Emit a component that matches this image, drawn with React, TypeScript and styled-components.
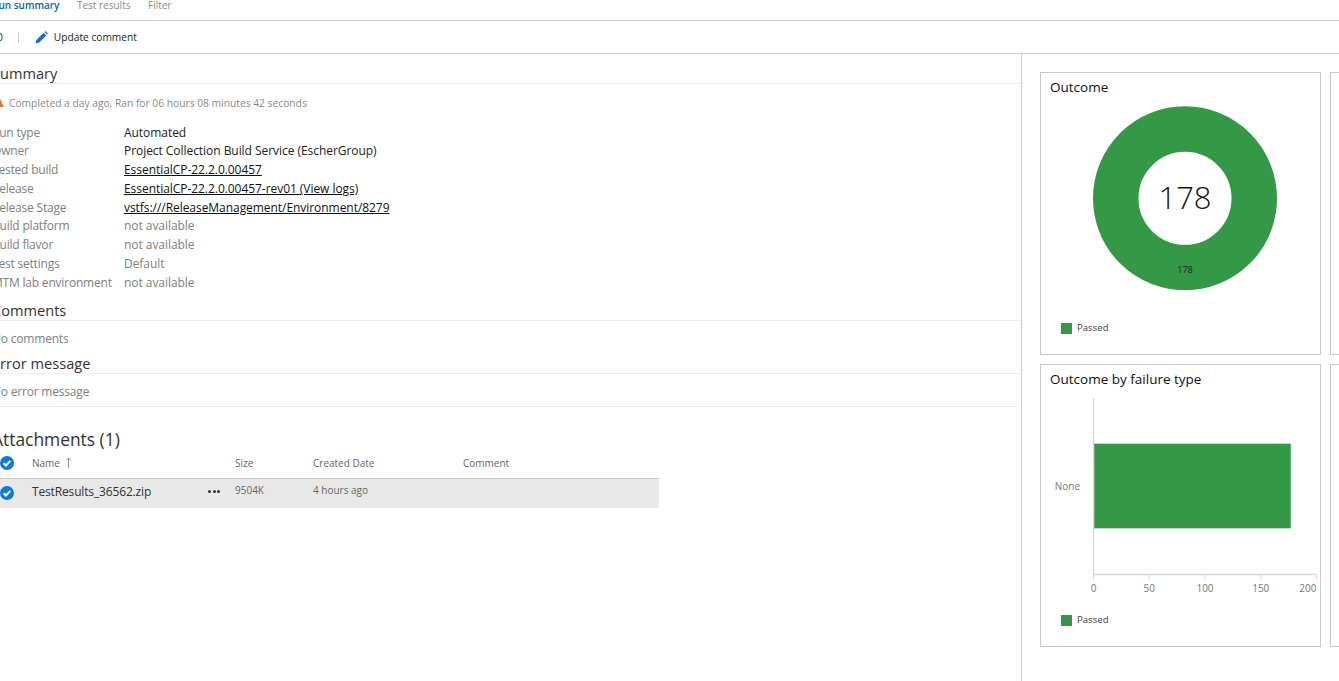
import React from "react";
import styled, { createGlobalStyle } from "styled-components";

const Global = createGlobalStyle`
  html, body { margin: 0; padding: 0; height: 100%; overflow: hidden; background: #fff; }
  body { font-family: "Open Sans", "Noto Sans", sans-serif; font-size: 12px; color: #222; }
  #root { height: 100%; }
`;
const Page = styled.div`
  width: 1347px; height: 681px; margin-left: -8px; display: flex; flex-direction: column; overflow: hidden;
`;
const Tabs = styled.div`
  height: 20px; flex: none; display: flex; gap: 17.5px; border-bottom: 1px solid #ccc;
  font-size: 10px; line-height: 11px;
`;
const Tab = styled.span<{ $active?: boolean }>`
  color: ${p => (p.$active ? "#0f5f9e" : "#8a8a8a")};
  font-weight: ${p => (p.$active ? 600 : 400)};
`;
const Toolbar = styled.div`
  height: 32px; flex: none; display: flex; align-items: center; border-bottom: 1px solid #ccc; font-size: 10.2px; color: #222;
`;
const ToolCount = styled.span`margin-left: 5px;`;
const Sep = styled.span`width: 1px; height: 11px; background: #ccc; margin: 0 16px 0 15px;`;
const Pencil = styled.svg`margin-right: 6px; flex: none;`;
const Body = styled.div`flex: 1; display: flex; min-height: 0;`;
const Main = styled.div`width: 1030px; flex: none; border-right: 1px solid #ccc; box-sizing: border-box;`;
const SectionTitle = styled.div<{ $top: number }>`
  font-size: 14.6px; line-height: 19px; color: #333; border-bottom: 1px solid #eee;
  padding-top: ${p => p.$top}px; height: 19px;
`;
const Status = styled.div`display: flex; align-items: center; gap: 4px; margin-top: 12px; font-size: 10.25px; color: #8a8a8a; line-height: 14px;`;
const Warn = styled.svg`margin-left: 3px; flex: none;`;
const Rows = styled.div`margin-top: 13.7px;`;
const Row = styled.div`display: grid; grid-template-columns: 132px 1fr; height: 18.75px; line-height: 18px;`;
const Label = styled.span`color: #808080; letter-spacing: -0.2px;`;
const Value = styled.span<{ $muted?: boolean }>`
  color: ${p => (p.$muted ? "#808080" : "#222")}; letter-spacing: -0.05px;
`;
const LinkValue = styled.span`color: #111; text-decoration: underline; letter-spacing: -0.05px;`;
const Note = styled.div<{ $ruled?: boolean }>`
  color: #808080; letter-spacing: -0.2px; padding-top: 9px; line-height: 18px;
  height: ${p => (p.$ruled ? "23px" : "14px")};
  border-bottom: ${p => (p.$ruled ? "1px solid #eee" : "none")};
`;
const Table = styled.div`width: 667px;`;
const AttTitle = styled.div`font-size: 17.4px; line-height: 22px; color: #333; margin-top: 21px;`;
const TableRow = styled.div<{ $head?: boolean }>`
  display: grid; grid-template-columns: 40px 176px 27px 78px 150px 1fr; align-items: center;
  height: ${p => (p.$head ? "26px" : "29px")};
  padding-bottom: ${p => (p.$head ? "2px" : "0")};
  background: ${p => (p.$head ? "#fff" : "#e8e8e8")};
  border-bottom: ${p => (p.$head ? "1px solid #ccc" : "none")};
  font-size: 10px; color: #666;
`;
const CheckCell = styled.span`padding-left: 8px; display: flex;`;
const NameHead = styled.span`display: flex; align-items: center; gap: 5px;`;
const FileName = styled.span`font-size: 12px; color: #333; letter-spacing: -0.15px; padding-bottom: 3px;`;
const RowCell = styled.span`padding-bottom: 7px;`;
const Dots = styled.span`display: flex; gap: 1.5px; padding-bottom: 3px;`;
const Dot = styled.i`width: 3px; height: 3px; background: #333; border-radius: 50%;`;
const Side = styled.div`flex: 1; display: grid; grid-template-columns: 281px 281px; grid-auto-rows: 283px; gap: 9px 9px; padding: 18px 0 0 18px;`;
const Card = styled.div`border: 1px solid #c8c8c8; box-sizing: border-box; display: flex; flex-direction: column; padding: 6px 9px; height: 283px;`;
const CardTitle = styled.div`font-size: 13.5px; line-height: 17px; color: #111;`;
const Chart = styled.div`flex: 1; display: flex; min-height: 0;`;
const ChartSvg = styled.svg`overflow: visible; font-family: "Open Sans", "Noto Sans", sans-serif;`;
const Legend = styled.div`display: flex; align-items: center; gap: 5px; padding-left: 11px; font-size: 9.6px; line-height: 14px; color: #444; margin-bottom: 13px;`;
const Swatch = styled.span`width: 11px; height: 11px; background: #339947;`;

const Check = () => (
  <svg width="14" height="14" viewBox="0 0 14 14"><circle cx="7" cy="7" r="7" fill="#0f7ad6" /><path d="M3.6 7.2l2.3 2.3 4.4-4.6" fill="none" stroke="#fff" strokeWidth="2" /></svg>
);

const ticks = [0, 50, 100, 150, 200];

export default function App() {
  return (
    <Page>
      <Global />
      <Tabs><Tab $active>Run summary</Tab><Tab>Test results</Tab><Tab>Filter</Tab></Tabs>
      <Toolbar>
        <ToolCount>0</ToolCount><Sep />
        <Pencil width="13" height="13" viewBox="0 0 13 13"><path d="M0.5 12.5l1-3.6L8.6 1.8l2.6 2.6-7.1 7.1z" fill="#0f6fc6" /><path d="M9.5 1l.9-.9 2.5 2.5-.9.9z" fill="#0f6fc6" /></Pencil>
        Update comment
      </Toolbar>
      <Body>
        <Main>
          <SectionTitle $top={10}>Summary</SectionTitle>
          <Status>
            <Warn width="10" height="10" viewBox="0 0 10 10"><path d="M5 1l4 8H1z" fill="#d9773f" /></Warn>
            Completed a day ago, Ran for 06 hours 08 minutes 42 seconds
          </Status>
          <Rows>
            <Row><Label>Run type</Label><Value>Automated</Value></Row>
            <Row><Label>Owner</Label><Value>Project Collection Build Service (EscherGroup)</Value></Row>
            <Row><Label>Tested build</Label><LinkValue>EssentialCP-22.2.0.00457</LinkValue></Row>
            <Row><Label>Release</Label><LinkValue>EssentialCP-22.2.0.00457-rev01 (View logs)</LinkValue></Row>
            <Row><Label>Release Stage</Label><LinkValue>vstfs:///ReleaseManagement/Environment/8279</LinkValue></Row>
            <Row><Label>Build platform</Label><Value $muted>not available</Value></Row>
            <Row><Label>Build flavor</Label><Value $muted>not available</Value></Row>
            <Row><Label>Test settings</Label><Value $muted>Default</Value></Row>
            <Row><Label>MTM lab environment</Label><Value $muted>not available</Value></Row>
          </Rows>
          <SectionTitle $top={8.3}>Comments</SectionTitle>
          <Note>No comments</Note>
          <SectionTitle $top={10}>Error message</SectionTitle>
          <Note $ruled>No error message</Note>
          <AttTitle>Attachments (1)</AttTitle>
          <Table>
            <TableRow $head>
              <CheckCell><Check /></CheckCell>
              <NameHead>Name
                <svg width="7" height="11" viewBox="0 0 7 11"><path d="M3.5 11V1M1 3.5L3.5 1 6 3.5" fill="none" stroke="#777" strokeWidth="0.8" /></svg>
              </NameHead>
              <span /><span>Size</span><span>Created Date</span><span>Comment</span>
            </TableRow>
            <TableRow>
              <CheckCell><Check /></CheckCell>
              <FileName>TestResults_36562.zip</FileName>
              <Dots><Dot /><Dot /><Dot /></Dots>
              <RowCell>9504K</RowCell><RowCell>4 hours ago</RowCell><span />
            </TableRow>
          </Table>
        </Main>
        <Side>
          <Card>
            <CardTitle>Outcome</CardTitle>
            <Chart>
              <ChartSvg width="261" height="205" viewBox="0 0 261 205">
                <circle cx="135" cy="102.3" r="69.25" fill="none" stroke="#339947" strokeWidth="45.5" />
                <text x="135" y="113" textAnchor="middle" fontSize="31" fontWeight="300" fill="#111">178</text>
                <text x="135" y="177" textAnchor="middle" fontSize="9" fill="#222">178</text>
              </ChartSvg>
            </Chart>
            <Legend><Swatch />Passed</Legend>
          </Card>
          <Card />
          <Card>
            <CardTitle>Outcome by failure type</CardTitle>
            <Chart>
              <ChartSvg width="261" height="205" viewBox="0 0 261 205">
                <path d="M43.5 10V186.5H266.5" stroke="#d8d8d8" strokeWidth="1.3" fill="none" />
                <rect x="44" y="55.5" width="197" height="85" fill="#339947" stroke="#d5ebd9" strokeWidth="0.6" />
                <text x="30" y="102" textAnchor="end" fontSize="10" fill="#777">None</text>
                {ticks.map((v, i) => (
                  <path key={v} d={`M${43.5 + i * 55.75} 186.5v5`} stroke="#d8d8d8" fill="none" />
                ))}
                {ticks.map((v, i) => (
                  <text key={v} x={i === 4 ? 266.5 : 43.5 + i * 55.75} y="203.5" textAnchor={i === 4 ? "end" : "middle"} fontSize="10" fill="#777">{v}</text>
                ))}
              </ChartSvg>
            </Chart>
            <Legend><Swatch />Passed</Legend>
          </Card>
          <Card />
        </Side>
      </Body>
    </Page>
  );
}
